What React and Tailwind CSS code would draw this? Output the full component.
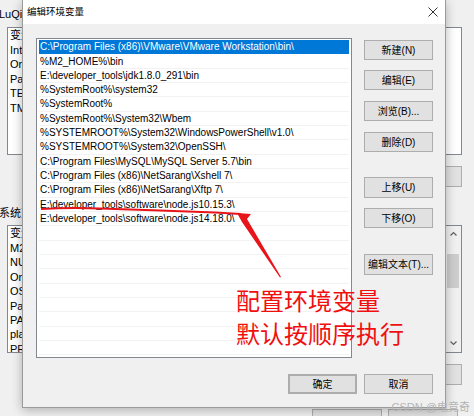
const paths = [
  'C:\\Program Files (x86)\\VMware\\VMware Workstation\\bin\\',
  '%M2_HOME%\\bin',
  'E:\\developer_tools\\jdk1.8.0_291\\bin',
  '%SystemRoot%\\system32',
  '%SystemRoot%',
  '%SystemRoot%\\System32\\Wbem',
  '%SYSTEMROOT%\\System32\\WindowsPowerShell\\v1.0\\',
  '%SYSTEMROOT%\\System32\\OpenSSH\\',
  'C:\\Program Files\\MySQL\\MySQL Server 5.7\\bin',
  'C:\\Program Files (x86)\\NetSarang\\Xshell 7\\',
  'C:\\Program Files (x86)\\NetSarang\\Xftp 7\\',
  'E:\\developer_tools\\software\\node.js10.15.3\\',
  'E:\\developer_tools\\software\\node.js14.18.0\\',
];

const userVars = ['IntelliJ IDEA', 'OneDrive', 'Path', 'TEMP', 'TMP'];
const sysVars = ['M2_HOME', 'NUMBER_OF_PROCESSORS', 'OnlineServices', 'OS', 'Path', 'PATHEXT', 'platformcode', 'PROCESSOR'];

function Btn({ children, className = '' }) {
  return (
    <div className={`flex h-[20px] w-[69px] items-center justify-center border border-[#adadad] bg-[#e1e1e1] text-[10px] text-black ${className}`}>
      {children}
    </div>
  );
}

function BgList({ rows, scroll = false }) {
  return (
    <div className="flex h-[128px] overflow-hidden border border-[#828790] bg-white">
      <div className="flex-1 overflow-hidden pl-[2px] text-[11px] leading-[14.4px]">
        <div className="flex h-[15px] items-center">变量</div>
        {rows.map((r, i) => (
          <div key={i} className="h-[14.4px] whitespace-nowrap">{r}</div>
        ))}
      </div>
      {scroll && (
        <div className="flex w-[16px] flex-col items-center bg-[#f0f0f0] pt-[2px] text-[#606060]">
          <svg width="9" height="12" viewBox="0 0 9 12"><path d="M1.5 7.5 L4.5 4.5 L7.5 7.5" fill="none" stroke="currentColor" strokeWidth="1.2" /></svg>
          <div className="mt-[14px] h-[34px] w-[12px] bg-[#cdcdcd]" />
          <div className="flex-1" />
          <svg width="9" height="12" viewBox="0 0 9 12" className="mb-[3px]"><path d="M1.5 4.5 L4.5 7.5 L7.5 4.5" fill="none" stroke="currentColor" strokeWidth="1.2" /></svg>
        </div>
      )}
    </div>
  );
}

function BgBtns() {
  return (
    <div className="flex justify-end gap-[6px]">
      <div className="h-[21px] w-[70px] border border-[#adadad] bg-[#e1e1e1]" />
      <div className="h-[21px] w-[70px] border border-[#adadad] bg-[#e1e1e1]" />
      <div className="h-[21px] w-[70px] border border-[#adadad] bg-[#e1e1e1]" />
    </div>
  );
}

export default function App() {
  const empties = Array.from({ length: 9 });
  return (
    <div className="relative h-[416px] w-[474px] overflow-hidden bg-[#f0f0f0] font-['Liberation_Sans','Noto_Sans_CJK_SC',sans-serif] text-black">
      {/* background window: 环境变量 */}
      <div className="flex flex-col pl-[7px] pr-[12px]">
        <div className="-ml-[8px] flex h-[27px] items-center pt-[2px] text-[11px]">LuQi 的用户变量(U)</div>
        <BgList rows={userVars} />
        <div className="mt-[11px]"><BgBtns /></div>
        <div className="-ml-[8px] flex h-[38px] items-center pt-[14px] text-[11px]">系统变量(S)</div>
        <BgList rows={sysVars} scroll />
        <div className="mt-[11px]"><BgBtns /></div>
        <div className="mr-[4px] mt-[24px] flex justify-end gap-[6px]">
          <div className="h-[21px] w-[70px] border border-[#adadad] bg-[#e1e1e1]" />
          <div className="h-[21px] w-[70px] border border-[#adadad] bg-[#e1e1e1]" />
        </div>
      </div>

      {/* dialog: 编辑环境变量 */}
      <div className="absolute left-[22px] top-0 flex w-[424px] flex-col border border-t-0 border-[#9a9a9a] bg-[#f0f0f0] shadow-[0_2px_10px_rgba(0,0,0,0.28)]">
        <div className="flex h-[24px] items-center justify-between bg-white pl-[4px] pr-[7px] text-[9.5px]">
          <span>编辑环境变量</span>
          <svg width="10" height="10" viewBox="0 0 10 10">
            <path d="M0.5 0.5 L9.5 9.5 M9.5 0.5 L0.5 9.5" stroke="#333" strokeWidth="1" fill="none" />
          </svg>
        </div>
        <div className="flex gap-[12px] pl-[13px] pr-[12px] pt-[14px]">
          <div className="h-[320px] w-[316px] overflow-hidden border border-[#828790] bg-white px-[2px] pt-[1px] text-[10px]">
            {paths.map((p, i) => (
              <div
                key={i}
                className={`flex h-[14.33px] items-center whitespace-nowrap border-b pl-[1px] ${i === 0 ? 'border-[#0078d7] bg-[#0078d7] text-white' : 'border-[#f2f2f2]'}`}
              >
                {p}
              </div>
            ))}
            {empties.map((_, i) => (
              <div key={i} className="h-[14.33px] border-b border-[#f2f2f2]" />
            ))}
          </div>
          <div className="flex w-[69px] flex-col pt-[2px]">
            <Btn>新建(N)</Btn>
            <Btn className="mt-[10px]">编辑(E)</Btn>
            <Btn className="mt-[11px]">浏览(B)...</Btn>
            <Btn className="mt-[11px]">删除(D)</Btn>
            <Btn className="mt-[25px] h-[21px]">上移(U)</Btn>
            <Btn className="mt-[10px]">下移(O)</Btn>
            <Btn className="mt-[26px] h-[21px]">编辑文本(T)...</Btn>
          </div>
        </div>
        <div className="flex justify-end gap-[7px] pb-[13px] pr-[12px] pt-[16px]">
          <Btn className="border-2 border-[#0078d7]">确定</Btn>
          <Btn>取消</Btn>
        </div>
      </div>

      {/* red annotation */}
      <svg className="pointer-events-none absolute left-0 top-0" width="474" height="416" viewBox="0 0 474 416">
        <path d="M41 209 Q 70 207.5 100 208.5 T 160 210.5 T 215 212.5 L 241 214" fill="none" stroke="#e8141a" strokeWidth="2" />
        <polygon points="237,213 251,214 247,219 281,277 280,277.5 242,222" fill="#e8141a" />
      </svg>
      <div className="absolute left-[236px] top-[285px] text-[24px] leading-[33px] text-[#f01010]">
        <div>配置环境变量</div>
        <div>默认按顺序执行</div>
      </div>
      <div className="absolute bottom-[1px] right-[4px] text-[11px] text-[#b4b4b4]">CSDN @电竞奇</div>
    </div>
  );
}
